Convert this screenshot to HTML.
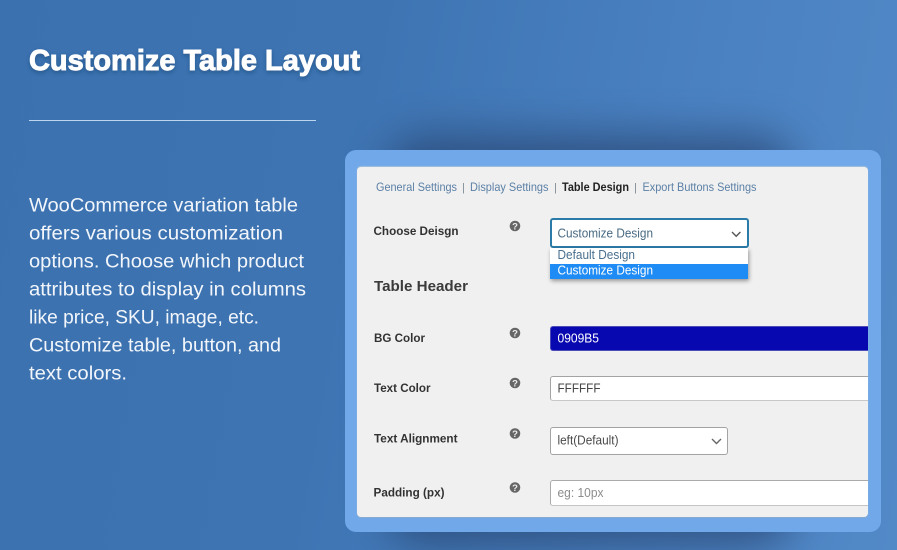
<!DOCTYPE html>
<html><head><meta charset="utf-8"><title>Customize Table Layout</title>
<style>
html,body{margin:0;padding:0}
body{width:897px;height:550px;overflow:hidden;position:relative;font-family:"Liberation Sans",sans-serif;background:linear-gradient(100deg,#3b71af 0%,#3e74b2 38%,#4a81c1 72%,#5289c7 100%)}
.abs{position:absolute}
#shadow{left:385px;top:135px;width:410px;height:412px;background:#27436f;opacity:.72;border-radius:40px;filter:blur(21px)}
#card{left:345px;top:150px;width:536px;height:382px;border-radius:11px;background:#70a8e9}
#inner{left:357px;top:167px;width:511px;height:350px;background:#f0f0f0;border-radius:4px;overflow:hidden;box-shadow:0 -1px 1px #a3bfdc,0 1px 1px #8aaccf;filter:blur(.3px)}
svg{position:absolute;left:0;top:0;overflow:visible}
.field{position:absolute;background:#fff;box-sizing:border-box;border:1px solid #a3a3a3;border-radius:3px}
</style></head>
<body>
<div class="abs" id="shadow"></div>
<div class="abs" id="card"></div>
<div class="abs" style="left:29px;top:120px;width:287px;height:1px;background:#bcd6f0"></div>
<div class="abs" id="inner">
  <div class="field" style="left:192.500px;top:51px;width:199px;height:29.500px;border:2px solid #2a7ba8;border-radius:3px"></div>
  <div class="abs" style="left:193px;top:80.500px;width:198px;height:31.500px;background:#fff;box-shadow:1px 2px 4px rgba(0,0,0,.38)"></div>
  <div class="abs" style="left:193px;top:97px;width:198px;height:15px;background:#1e8cf4"></div>
  <div class="field" style="left:193px;top:159px;width:340px;height:25px;background:#0808b0;border:1px solid #4c4cb8"></div>
  <div class="field" style="left:193px;top:209px;width:340px;height:25px;border-bottom-color:#c8c8c8"></div>
  <div class="field" style="left:193px;top:259.500px;width:178px;height:28.500px"></div>
  <div class="field" style="left:193px;top:313px;width:340px;height:25.500px;border-color:#aaa;border-bottom-color:#c4c4c4"></div>
</div>
<svg width="897" height="550" viewBox="0 0 897 550" font-family="'Liberation Sans',sans-serif">
  <defs>
    <filter id="ts" x="-5%" y="-30%" width="110%" height="170%"><feGaussianBlur in="SourceGraphic" stdDeviation=".2" result="b"/><feDropShadow in="b" dx="0" dy="2" stdDeviation="2" flood-color="#173a66" flood-opacity=".5"/></filter>
    <filter id="sb" x="-2%" y="-2%" width="104%" height="104%"><feGaussianBlur stdDeviation=".28"/></filter>
  </defs>
  <text x="29" y="70" font-size="29" font-weight="700" fill="#fff" stroke="#fff" stroke-width=".9" textLength="331" lengthAdjust="spacingAndGlyphs" filter="url(#ts)">Customize Table Layout</text>
  <g font-size="19" fill="#f2f6fb" filter="url(#sb)">
    <text x="29" y="211.500" textLength="269" lengthAdjust="spacingAndGlyphs">WooCommerce variation table</text>
    <text x="29" y="239.500" textLength="254" lengthAdjust="spacingAndGlyphs">offers various customization</text>
    <text x="29" y="267.500" textLength="275" lengthAdjust="spacingAndGlyphs">options. Choose which product</text>
    <text x="29" y="295.500" textLength="277" lengthAdjust="spacingAndGlyphs">attributes to display in columns</text>
    <text x="29" y="323.500" textLength="230" lengthAdjust="spacingAndGlyphs">like price, SKU, image, etc.</text>
    <text x="29" y="351.500" textLength="252" lengthAdjust="spacingAndGlyphs">Customize table, button, and</text>
    <text x="29" y="379.500" textLength="98" lengthAdjust="spacingAndGlyphs">text colors.</text>
  </g>
  <g filter="url(#sb)">
  <g font-size="12">
    <text x="376" y="191" fill="#5b80a6" textLength="81" lengthAdjust="spacingAndGlyphs">General Settings</text>
    <text x="462" y="191" fill="#7d8a96" font-size="11">|</text>
    <text x="470" y="191" fill="#5b80a6" textLength="78.500" lengthAdjust="spacingAndGlyphs">Display Settings</text>
    <text x="554" y="191" fill="#7d8a96" font-size="11">|</text>
    <text x="562" y="191" fill="#222" font-weight="700" textLength="67" lengthAdjust="spacingAndGlyphs">Table Design</text>
    <text x="634" y="191" fill="#7d8a96" font-size="11">|</text>
    <text x="642.500" y="191" fill="#5b80a6" textLength="114" lengthAdjust="spacingAndGlyphs">Export Buttons Settings</text>
  </g>
  <g font-size="12" font-weight="700" fill="#333">
    <text x="373.500" y="235" textLength="85" lengthAdjust="spacingAndGlyphs">Choose Deisgn</text>
    <text x="374" y="342" textLength="51" lengthAdjust="spacingAndGlyphs">BG Color</text>
    <text x="374" y="392" textLength="56.500" lengthAdjust="spacingAndGlyphs">Text Color</text>
    <text x="374" y="442.500" textLength="83.500" lengthAdjust="spacingAndGlyphs">Text Alignment</text>
    <text x="373.500" y="496.500" textLength="71" lengthAdjust="spacingAndGlyphs">Padding (px)</text>
  </g>
  <text x="374" y="291" font-size="15" font-weight="700" fill="#3a3a3a" textLength="94" lengthAdjust="spacingAndGlyphs">Table Header</text>
  <g font-size="12.500">
    <text x="557.500" y="237.500" fill="#486a82" textLength="95.500" lengthAdjust="spacingAndGlyphs">Customize Design</text>
    <text x="557.500" y="259" fill="#48708f" textLength="77.500" lengthAdjust="spacingAndGlyphs">Default Design</text>
    <text x="557.500" y="274.500" fill="#fff" textLength="95.500" lengthAdjust="spacingAndGlyphs">Customize Design</text>
    <text x="557.500" y="342.500" fill="#fff" textLength="41.500" lengthAdjust="spacingAndGlyphs">0909B5</text>
    <text x="557.500" y="392.500" fill="#444" textLength="43" lengthAdjust="spacingAndGlyphs">FFFFFF</text>
    <text x="557.500" y="444.500" fill="#4b4b4b" textLength="61" lengthAdjust="spacingAndGlyphs">left(Default)</text>
    <text x="557.500" y="497" fill="#8c8c8c" textLength="46" lengthAdjust="spacingAndGlyphs">eg: 10px</text>
  </g>
  <path d="M732 232l4.200 4.200 4.200-4.200" fill="none" stroke="#555" stroke-width="1.400"/>
  <path d="M712 439l4.500 4.500 4.500-4.500" fill="none" stroke="#666" stroke-width="1.400"/>
  <g font-size="9.500" font-weight="700" text-anchor="middle">
    <circle cx="515" cy="226" r="5.300" fill="#666"/><text x="515" y="229.500" fill="#eee">?</text>
    <circle cx="515" cy="333" r="5.300" fill="#666"/><text x="515" y="336.500" fill="#eee">?</text>
    <circle cx="515" cy="383" r="5.300" fill="#666"/><text x="515" y="386.500" fill="#eee">?</text>
    <circle cx="515" cy="433.500" r="5.300" fill="#666"/><text x="515" y="437" fill="#eee">?</text>
    <circle cx="515" cy="487.500" r="5.300" fill="#666"/><text x="515" y="491" fill="#eee">?</text>
  </g>
  </g>
</svg>
</body></html>
